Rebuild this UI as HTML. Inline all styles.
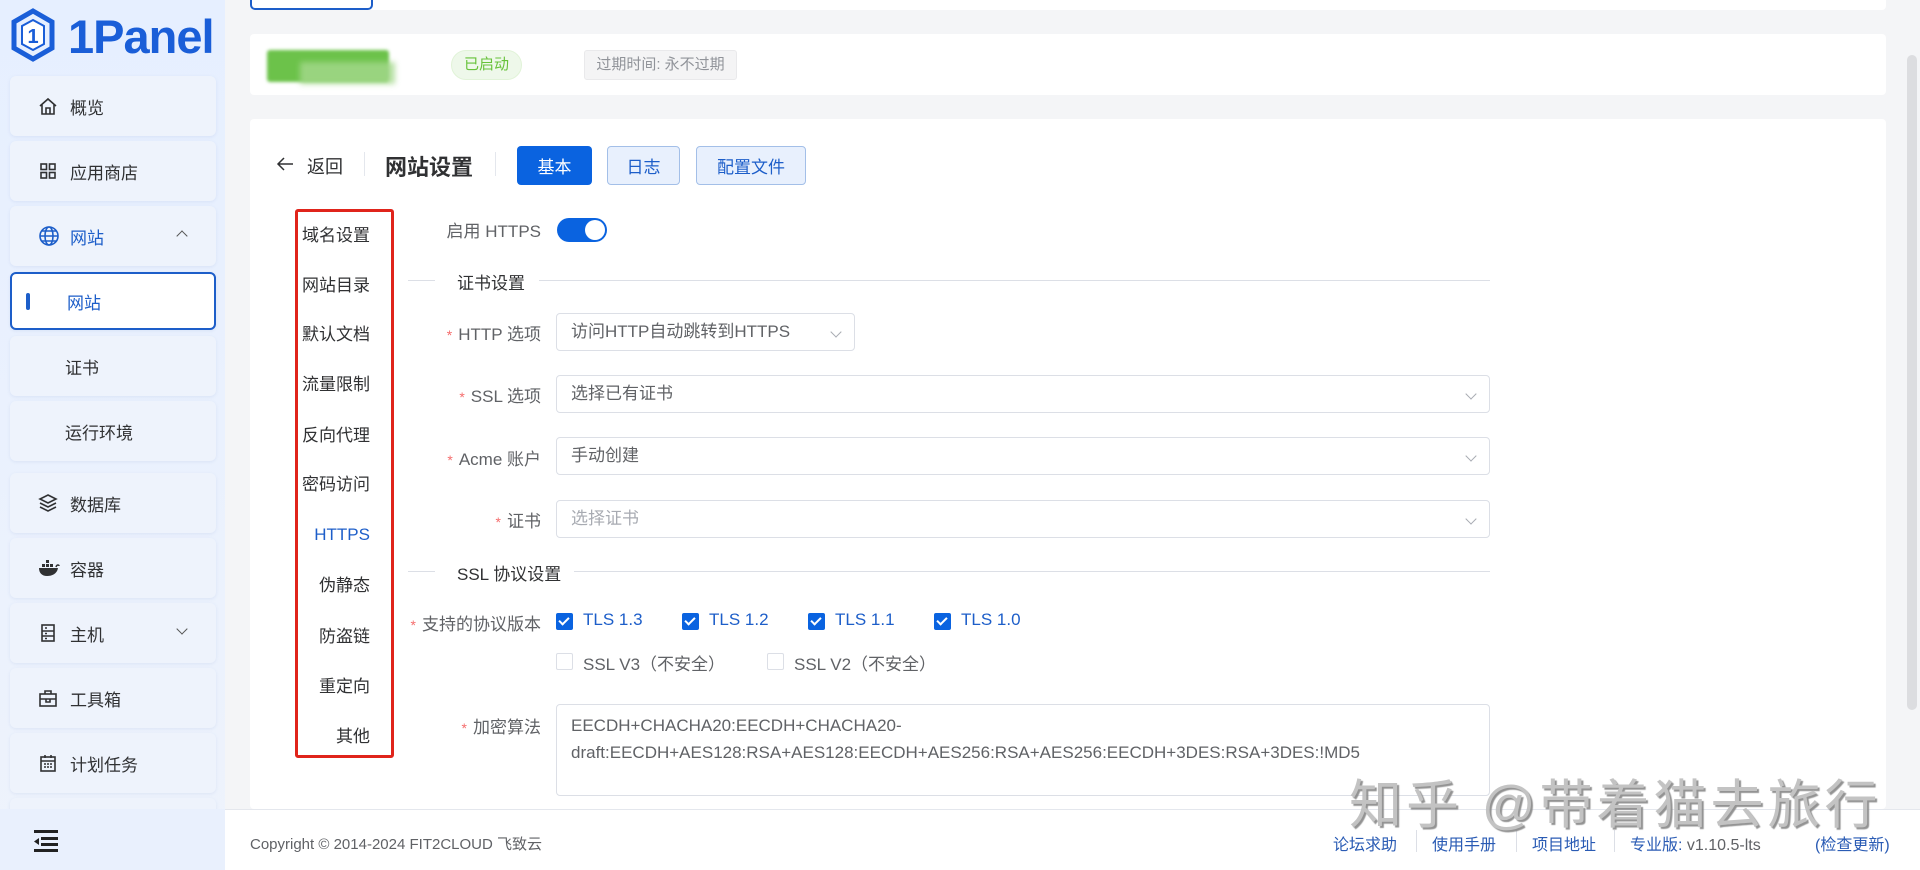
<!DOCTYPE html>
<html><head><meta charset="utf-8">
<style>
*{margin:0;padding:0;box-sizing:border-box}
body{width:1920px;height:870px;overflow:hidden;background:#f4f5f7;font-family:"Liberation Sans","Noto Sans CJK SC",sans-serif;font-size:17px;color:#303133;position:relative}
.a{position:absolute}
.side{left:0;top:0;width:225px;height:870px;background:linear-gradient(180deg,#e6efff 0%,#eef3fc 100%)}
.mi{position:absolute;left:10px;width:206px;height:60px;background:#eef3fc;border-radius:6px;box-shadow:0 1px 3px rgba(120,150,200,.15);display:flex;align-items:center;padding-left:28px;font-size:17px;color:#303133}
.mi svg{margin-right:12px}
.sub{background:#eef3fc}
.card{background:#fff;border-radius:4px}
.lbl{position:absolute;right:1379px;font-size:17px;color:#606266;text-align:right;white-space:nowrap}
.lbl b{color:#f56c6c;font-weight:normal;margin-right:6px;font-size:14px}
.sel{position:absolute;left:556px;border:1px solid #dcdfe6;border-radius:4px;height:38px;padding-left:14px;line-height:36px;color:#606266;font-size:17px;background:#fff}
.sel i{position:absolute;right:14px;top:14px;width:8px;height:8px;border-right:1px solid #a8abb2;border-bottom:1px solid #a8abb2;transform:rotate(45deg)}
.cb{position:absolute;width:17px;height:17px;border-radius:2px;background:#0a63e0}
.cb:after{content:"";position:absolute;left:5px;top:2px;width:4px;height:8px;border-right:2px solid #fff;border-bottom:2px solid #fff;transform:rotate(45deg)}
.cbe{position:absolute;width:17px;height:17px;border-radius:2px;border:1px solid #dcdfe6;background:#fff}
.cl{position:absolute;font-size:17px;color:#1d5ec9}
.div{position:absolute;height:1px;background:#dcdfe6}
.btn{position:absolute;top:146px;height:39px;border-radius:4px;font-size:17px;display:flex;align-items:center;justify-content:center}
.fl{position:absolute;top:831px;font-size:16px;color:#2a5bb4}
.fs{position:absolute;top:830px;width:1px;height:22px;background:#dcdfe6}
</style></head><body>
<div class="a side">
  <svg class="a" style="left:10px;top:8px" width="46" height="54" viewBox="0 0 46 54"><path d="M23 3 L42 14 L42 40 L23 51 L4 40 L4 14 Z" fill="none" stroke="#1a5ed8" stroke-width="5"/><path d="M23 12 L34 18 L34 36 L23 42 L12 36 L12 18 Z" fill="#fff" stroke="#1a5ed8" stroke-width="2"/><text x="23" y="35" text-anchor="middle" font-family="Liberation Sans" font-weight="bold" font-size="20" fill="#1a5ed8">1</text></svg>
  <div class="a" style="left:68px;top:9px;font-size:47px;font-weight:bold;color:#1a5ed8;letter-spacing:-1px">1Panel</div>
  <div class="mi" style="top:76px"><svg width="20" height="20" viewBox="0 0 20 20" fill="none" stroke="#303133" stroke-width="1.6"><path d="M2 10 L10 3 L18 10 M4 8 V18 H16 V8 M8 18 V12 H12 V18"/></svg>概览</div>
  <div class="mi" style="top:141px"><svg width="20" height="20" viewBox="0 0 20 20" fill="none" stroke="#303133" stroke-width="1.6"><rect x="3" y="3" width="5.5" height="5.5"/><rect x="11.5" y="3" width="5.5" height="5.5"/><rect x="3" y="11.5" width="5.5" height="5.5"/><rect x="11.5" y="11.5" width="5.5" height="5.5"/></svg>应用商店</div>
  <div class="mi" style="top:206px;color:#1d5ec9"><svg width="22" height="22" viewBox="0 0 22 22" fill="none" stroke="#1d5ec9" stroke-width="1.6" style="margin-right:10px"><circle cx="11" cy="11" r="9"/><ellipse cx="11" cy="11" rx="4" ry="9"/><path d="M2 11 H20 M4 6 H18 M4 16 H18"/></svg>网站<span style="position:absolute;right:30px;top:26px;width:8px;height:8px;border-left:1px solid #555;border-top:1px solid #555;transform:rotate(45deg)"></span></div>
  <div class="mi" style="top:272px;height:58px;background:#fff;border:2px solid #1d5ec9;color:#1d5ec9;padding-left:55px"><span style="position:absolute;left:14px;top:19px;width:4px;height:17px;background:#1d5ec9;border-radius:2px"></span>网站</div>
  <div class="mi sub" style="top:336px;padding-left:55px">证书</div>
  <div class="mi sub" style="top:401px;padding-left:55px">运行环境</div>
  <div class="mi" style="top:473px"><svg width="20" height="20" viewBox="0 0 20 20" fill="none" stroke="#303133" stroke-width="1.6"><path d="M10 2 L18 6 L10 10 L2 6 Z M2 10 L10 14 L18 10 M2 14 L10 18 L18 14"/></svg>数据库</div>
  <div class="mi" style="top:538px"><svg width="22" height="20" viewBox="0 0 22 20" fill="#303133" style="margin-right:10px"><path d="M1 10 H20 C19 16 14 18 9 18 C4 18 1 15 1 10 Z"/><rect x="4" y="6" width="3" height="3"/><rect x="8" y="6" width="3" height="3"/><rect x="12" y="6" width="3" height="3"/><rect x="8" y="2" width="3" height="3"/><path d="M18 9 C19 6 21 7 21 8" stroke="#303133" fill="none" stroke-width="1.5"/></svg>容器</div>
  <div class="mi" style="top:603px"><svg width="20" height="20" viewBox="0 0 20 20" fill="none" stroke="#303133" stroke-width="1.6"><rect x="4" y="2" width="12" height="16"/><path d="M4 8 H16 M4 13 H16 M7 5 H9 M7 10.5 H9 M7 15.5 H9"/></svg>主机<span style="position:absolute;right:30px;top:22px;width:8px;height:8px;border-right:1px solid #555;border-bottom:1px solid #555;transform:rotate(45deg)"></span></div>
  <div class="mi" style="top:668px"><svg width="20" height="20" viewBox="0 0 20 20" fill="none" stroke="#303133" stroke-width="1.6"><rect x="2" y="6" width="16" height="12"/><path d="M7 6 V3 H13 V6 M2 11 H18 M8 11 V14 H12 V11"/></svg>工具箱</div>
  <div class="mi" style="top:733px"><svg width="20" height="20" viewBox="0 0 20 20" fill="none" stroke="#303133" stroke-width="1.6"><rect x="3" y="4" width="14" height="14"/><path d="M3 8 H17 M7 2 V5 M13 2 V5 M6 11 H8 M9 11 H11 M12 11 H14 M6 14 H8 M9 14 H11 M12 14 H14"/></svg>计划任务</div>
  <div class="mi" style="top:798px;height:12px;border-radius:6px 6px 0 0"></div>
  <div class="a" style="left:0;top:809px;width:225px;height:61px;background:#e9f0fd"></div>
  <svg class="a" style="left:34px;top:830px" width="24" height="22" viewBox="0 0 24 22" fill="#222"><rect x="0" y="0" width="24" height="3"/><rect x="7" y="7" width="17" height="3"/><rect x="7" y="13" width="17" height="3"/><rect x="0" y="19" width="24" height="3"/><path d="M0 11.5 L5 8 V15 Z"/></svg>
</div>

<div class="a card" style="left:250px;top:0;width:1636px;height:10px;border-radius:0 0 4px 4px"></div>
<div class="a" style="left:250px;top:0;width:123px;height:10px;border:2px solid #1d5ec9;border-top:none;border-radius:0 0 5px 5px"></div>
<div class="a card" style="left:250px;top:34px;width:1636px;height:61px"></div>
<div class="a" style="left:267px;top:50px;width:122px;height:32px;background:#6cc24a;border-radius:3px;filter:blur(1.5px)"></div>
<div class="a" style="left:300px;top:62px;width:95px;height:22px;background:#a5d98d;filter:blur(3px);opacity:.8"></div>
<div class="a" style="left:451px;top:50px;width:71px;height:30px;border-radius:15px;background:#eef8ea;border:1px solid #e1f3d8;color:#67c23a;font-size:15px;line-height:28px;text-align:center">已启动</div>
<div class="a" style="left:584px;top:50px;width:153px;height:30px;border-radius:3px;background:#f4f4f5;border:1px solid #e9e9eb;color:#909399;font-size:15px;line-height:28px;text-align:center">过期时间: 永不过期</div>

<div class="a card" style="left:250px;top:119px;width:1636px;height:690px"></div>
<svg class="a" style="left:276px;top:156px" width="18" height="16" viewBox="0 0 18 16" fill="none" stroke="#303133" stroke-width="1.5"><path d="M17 8 H2 M8 2 L2 8 L8 14"/></svg>
<div class="a" style="left:307px;top:153px;font-size:18px;color:#303133">返回</div>
<div class="a" style="left:364px;top:152px;width:1px;height:24px;background:#e4e7ed"></div>
<div class="a" style="left:385px;top:150px;font-size:22px;font-weight:bold;color:#303133">网站设置</div>
<div class="a" style="left:495px;top:152px;width:1px;height:24px;background:#e4e7ed"></div>
<div class="btn" style="left:517px;width:75px;background:#0a63e0;color:#fff">基本</div>
<div class="btn" style="left:607px;width:73px;background:#e8f0fd;border:1px solid #a3bfe8;color:#1d5ec9">日志</div>
<div class="btn" style="left:696px;width:110px;background:#e8f0fd;border:1px solid #a3bfe8;color:#1d5ec9">配置文件</div>

<div class="a" style="left:295px;top:209px;width:99px;height:549px;border:3px solid #e0241b;border-radius:3px"></div>
<div class="a" style="left:300px;top:226px;width:70px;font-size:17px;line-height:20px;text-align:right">
<div style="position:absolute;right:0;top:0;white-space:nowrap">域名设置</div>
<div style="position:absolute;right:0;top:50px;white-space:nowrap">网站目录</div>
<div style="position:absolute;right:0;top:99px;white-space:nowrap">默认文档</div>
<div style="position:absolute;right:0;top:149px;white-space:nowrap">流量限制</div>
<div style="position:absolute;right:0;top:200px;white-space:nowrap">反向代理</div>
<div style="position:absolute;right:0;top:249px;white-space:nowrap">密码访问</div>
<div style="position:absolute;right:0;top:299px;color:#1d5ec9">HTTPS</div>
<div style="position:absolute;right:0;top:350px;white-space:nowrap">伪静态</div>
<div style="position:absolute;right:0;top:401px;white-space:nowrap">防盗链</div>
<div style="position:absolute;right:0;top:451px;white-space:nowrap">重定向</div>
<div style="position:absolute;right:0;top:501px;white-space:nowrap">其他</div>
</div>

<div class="lbl" style="top:217px">启用 HTTPS</div>
<div class="a" style="left:557px;top:218px;width:50px;height:24px;border-radius:12px;background:#0a63e0"></div>
<div class="a" style="left:585px;top:220px;width:20px;height:20px;border-radius:50%;background:#fff"></div>

<div class="div" style="left:408px;top:280px;width:27px"></div>
<div class="a" style="left:457px;top:269px;font-size:17px">证书设置</div>
<div class="div" style="left:539px;top:280px;width:951px"></div>

<div class="lbl" style="top:320px"><b>*</b>HTTP 选项</div>
<div class="sel" style="top:313px;width:299px">访问HTTP自动跳转到HTTPS<i></i></div>
<div class="lbl" style="top:382px"><b>*</b>SSL 选项</div>
<div class="sel" style="top:375px;width:934px">选择已有证书<i></i></div>
<div class="lbl" style="top:445px"><b>*</b>Acme 账户</div>
<div class="sel" style="top:437px;width:934px">手动创建<i></i></div>
<div class="lbl" style="top:507px"><b>*</b>证书</div>
<div class="sel" style="top:500px;width:934px;color:#a8abb2">选择证书<i></i></div>

<div class="div" style="left:408px;top:571px;width:27px"></div>
<div class="a" style="left:457px;top:560px;font-size:17px">SSL 协议设置</div>
<div class="div" style="left:574px;top:571px;width:916px"></div>

<div class="lbl" style="top:610px"><b>*</b>支持的协议版本</div>
<div class="cb" style="left:556px;top:613px"></div><div class="cl" style="left:583px;top:610px">TLS 1.3</div>
<div class="cb" style="left:682px;top:613px"></div><div class="cl" style="left:709px;top:610px">TLS 1.2</div>
<div class="cb" style="left:808px;top:613px"></div><div class="cl" style="left:835px;top:610px">TLS 1.1</div>
<div class="cb" style="left:934px;top:613px"></div><div class="cl" style="left:961px;top:610px">TLS 1.0</div>
<div class="cbe" style="left:556px;top:653px"></div><div class="a" style="left:583px;top:650px;color:#606266">SSL V3（不安全）</div>
<div class="cbe" style="left:767px;top:653px"></div><div class="a" style="left:794px;top:650px;color:#606266">SSL V2（不安全）</div>

<div class="lbl" style="top:713px"><b>*</b>加密算法</div>
<div class="a" style="left:556px;top:704px;width:934px;height:92px;border:1px solid #dcdfe6;border-radius:4px;padding:7px 14px;line-height:27px;color:#606266;font-size:17px">EECDH+CHACHA20:EECDH+CHACHA20-<br>draft:EECDH+AES128:RSA+AES128:EECDH+AES256:RSA+AES256:EECDH+3DES:RSA+3DES:!MD5</div>

<div class="a" style="left:1904px;top:0;width:16px;height:809px;background:#f4f5f7"></div>
<div class="a" style="left:1907px;top:55px;width:10px;height:655px;border-radius:5px;background:#dcdde0"></div>

<div class="a" style="left:225px;top:809px;width:1695px;height:61px;background:#fff;border-top:1px solid #e4e7ed"></div>
<div class="a" style="left:250px;top:833px;font-size:15px;color:#606266">Copyright © 2014-2024 FIT2CLOUD 飞致云</div>
<div class="fl" style="left:1333px">论坛求助</div><div class="fs" style="left:1416px"></div>
<div class="fl" style="left:1432px">使用手册</div><div class="fs" style="left:1516px"></div>
<div class="fl" style="left:1532px">项目地址</div><div class="fs" style="left:1614px"></div>
<div class="fl" style="left:1630px">专业版: <span style="color:#606266">v1.10.5-lts</span></div>
<div class="fl" style="left:1815px">(检查更新)</div>

<div class="a" style="left:1349px;top:763px;font-size:53px;color:#bdbdbd;text-shadow:2px 2px 1px #888;letter-spacing:4px;white-space:nowrap;opacity:.9">知乎 @带着猫去旅行</div>
</body></html>
